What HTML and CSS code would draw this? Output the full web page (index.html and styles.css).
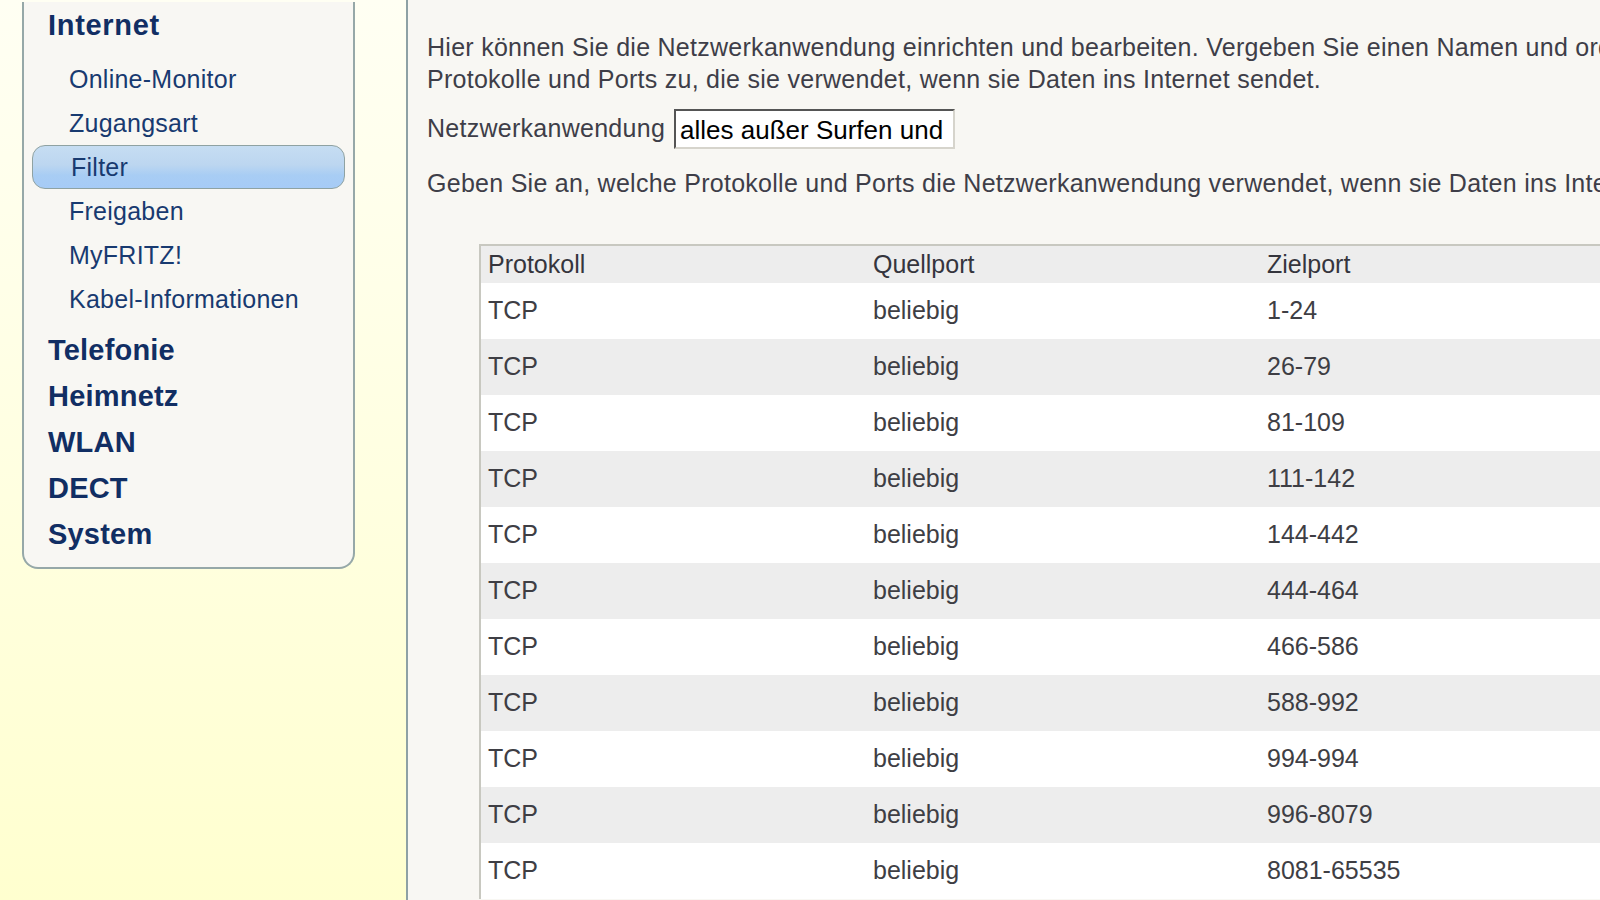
FILE: index.html
```html
<!DOCTYPE html>
<html lang="de">
<head>
<meta charset="utf-8">
<title>FRITZ!Box – Filter</title>
<link rel="stylesheet" href="styles.css">
</head>
<body>
<div class="page">
  <aside class="sidebar">
    <nav class="menu">
      <div class="group">
        <a class="main-item first">Internet</a>
        <ul class="submenu">
          <li><a class="sub-item">Online-Monitor</a></li>
          <li><a class="sub-item">Zugangsart</a></li>
          <li><a class="sub-item active">Filter</a></li>
          <li><a class="sub-item">Freigaben</a></li>
          <li><a class="sub-item">MyFRITZ!</a></li>
          <li><a class="sub-item">Kabel-Informationen</a></li>
        </ul>
      </div>
      <ul class="mainlist">
        <li><a class="main-item">Telefonie</a></li>
        <li><a class="main-item">Heimnetz</a></li>
        <li><a class="main-item">WLAN</a></li>
        <li><a class="main-item">DECT</a></li>
        <li><a class="main-item">System</a></li>
      </ul>
    </nav>
  </aside>
  <main class="content">
    <p class="text intro">Hier können Sie die Netzwerkanwendung einrichten und bearbeiten. Vergeben Sie einen Namen und ordnen Sie der Netzwerkanwendung die<br>Protokolle und Ports zu, die sie verwendet, wenn sie Daten ins Internet sendet.</p>
    <div class="field">
      <label class="text" for="app">Netzwerkanwendung</label>
      <input id="app" class="input" type="text" value="alles außer Surfen und Mailen">
    </div>
    <p class="text hint">Geben Sie an, welche Protokolle und Ports die Netzwerkanwendung verwendet, wenn sie Daten ins Internet sendet.</p>
    <table class="ports">
      <thead>
        <tr><th class="c1">Protokoll</th><th class="c2">Quellport</th><th class="c3">Zielport</th><th class="c4"></th></tr>
      </thead>
      <tbody>
        <tr><td>TCP</td><td>beliebig</td><td>1-24</td><td></td></tr>
        <tr><td>TCP</td><td>beliebig</td><td>26-79</td><td></td></tr>
        <tr><td>TCP</td><td>beliebig</td><td>81-109</td><td></td></tr>
        <tr><td>TCP</td><td>beliebig</td><td>111-142</td><td></td></tr>
        <tr><td>TCP</td><td>beliebig</td><td>144-442</td><td></td></tr>
        <tr><td>TCP</td><td>beliebig</td><td>444-464</td><td></td></tr>
        <tr><td>TCP</td><td>beliebig</td><td>466-586</td><td></td></tr>
        <tr><td>TCP</td><td>beliebig</td><td>588-992</td><td></td></tr>
        <tr><td>TCP</td><td>beliebig</td><td>994-994</td><td></td></tr>
        <tr><td>TCP</td><td>beliebig</td><td>996-8079</td><td></td></tr>
        <tr><td>TCP</td><td>beliebig</td><td>8081-65535</td><td></td></tr>
      </tbody>
    </table>
  </main>
</div>
</body>
</html>
```
FILE: styles.css
```css
html, body {
  margin: 0;
  padding: 0;
  height: 100%;
  overflow: hidden;
}

body {
  font-family: "Liberation Sans", Arial, sans-serif;
}

.page {
  display: flex;
  width: 1600px;
  height: 900px;
  overflow: hidden;
}

/* ---------- sidebar ---------- */
.sidebar {
  flex: 0 0 406px;
  height: 900px;
  background: linear-gradient(to bottom, #fffff3 0%, #ffffe0 55%, #ffffcf 100%);
  border-right: 2px solid #8ea1a5;
}

.menu {
  margin-left: 22px;
  width: 329px;
  background: #f8f7f3;
  border: 2px solid #96a8a8;
  border-top: none;
  border-radius: 0 0 16px 16px;
  padding-bottom: 10px;
}

.main-item {
  display: block;
  padding-left: 24px;
  height: 46px;
  line-height: 46px;
  font-size: 29px;
  font-weight: bold;
  color: #112e63;
  letter-spacing: 0.2px;
}

.main-item.first {
  margin-top: 2px;
  letter-spacing: 0.7px;
}

.submenu,
.mainlist {
  list-style: none;
  margin: 0;
  padding: 0;
}

.submenu {
  margin-top: 9px;
  margin-bottom: 6px;
}

.sub-item {
  display: block;
  box-sizing: border-box;
  margin: 0 8px;
  height: 44px;
  line-height: 42px;
  padding-left: 36px;
  font-size: 25px;
  letter-spacing: 0.25px;
  color: #183a70;
  border: 1px solid transparent;
  border-radius: 13px;
}

.sub-item.active {
  padding-left: 38px;
  border-color: #8fa2a2;
  background: linear-gradient(to bottom, #c6ddf2 0%, #bcd6f0 45%, #a8cdf4 70%, #a6cbf6 100%);
}

/* ---------- content ---------- */
.content {
  flex: 1;
  background: #f8f7f3;
  padding: 32px 0 0 19px;
  overflow: hidden;
  min-width: 0;
}

.text {
  font-size: 25px;
  line-height: 31.6px;
  letter-spacing: 0.27px;
  color: #3e3e48;
  white-space: nowrap;
}

.intro {
  margin: 0;
}

.field {
  display: flex;
  align-items: center;
  gap: 9px;
  margin-top: 14px;
}

.input {
  box-sizing: border-box;
  width: 281px;
  height: 40px;
  margin: 0;
  padding: 2px 4px 0;
  font-family: "Liberation Sans", Arial, sans-serif;
  font-size: 26px;
  color: #000;
  background: #fff;
  border-style: solid;
  border-width: 2px;
  border-color: #555 #d6d4cc #d6d4cc #555;
  outline: none;
}

.hint {
  margin: 19px 0 0;
}

.ports {
  margin: 44px 0 0 52px;
  border-collapse: separate;
  border-spacing: 0;
  border-top: 2px solid #c8c8c0;
  border-left: 2px solid #c8c8c0;
  width: 1400px;
  font-size: 25px;
  color: #3e3e44;
}

.ports th,
.ports td {
  text-align: left;
  font-weight: normal;
  padding: 0 0 0 7px;
  white-space: nowrap;
}

.ports th {
  height: 37px;
  background: #ededed;
  color: #35353d;
}

.ports td {
  height: 56px;
}

.ports tbody tr:nth-child(odd) td {
  background: #ffffff;
}

.ports tbody tr:nth-child(even) td {
  background: #ededed;
}

.c1 { width: 378px; }
.c2 { width: 387px; }
.c3 { width: 380px; }
```
